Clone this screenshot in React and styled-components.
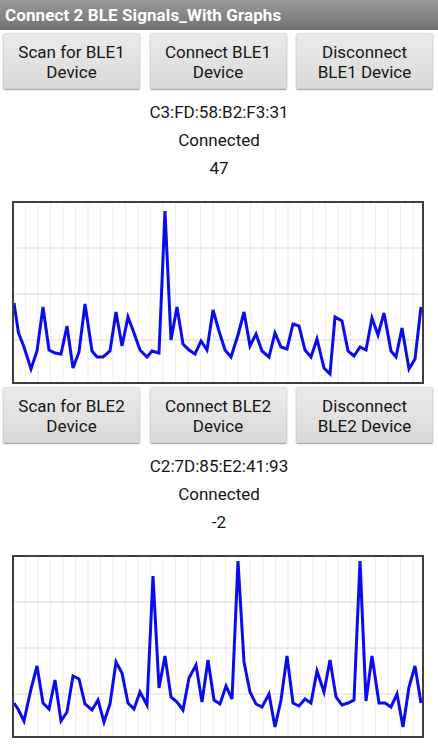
import React from "react";
import styled, { createGlobalStyle } from "styled-components";

const GlobalStyle = createGlobalStyle`
  html, body {
    margin: 0;
    padding: 0;
    background: #ffffff;
  }
  body {
    font-family: Roboto, "Noto Sans", "Liberation Sans", sans-serif;
    color: #1a1a1a;
  }
  * { box-sizing: border-box; }
`;

const Screen = styled.div`
  width: 438px;
  min-height: 750px;
  background: #ffffff;
  display: flex;
  flex-direction: column;
`;

const TitleBar = styled.div`
  height: 30px;
  display: flex;
  align-items: center;
  padding-left: 5px;
  background: linear-gradient(#9a9a9a, #727272);
  color: #ffffff;
  font-weight: 700;
  font-size: 17px;
  letter-spacing: 0.1px;
`;

const Section = styled.section`
  display: flex;
  flex-direction: column;
`;

const ButtonRow = styled.div`
  display: grid;
  grid-template-columns: repeat(3, 137px);
  column-gap: 9.5px;
  padding-left: 3px;
  margin-top: 3px;
`;

const ActionButton = styled.button`
  height: 56px;
  margin: 0;
  padding: 2px 2px 0;
  border: none;
  border-radius: 2px;
  background: linear-gradient(#ebebeb, #d9d9d9);
  box-shadow: 0 1px 1.5px rgba(0, 0, 0, 0.4), inset 0 0 0 1px rgba(0, 0, 0, 0.05);
  font-family: Roboto, "Noto Sans", "Liberation Sans", sans-serif;
  font-size: 17px;
  line-height: 20px;
  color: #161616;
  text-align: center;
  cursor: pointer;
`;

const StatusBlock = styled.div`
  margin-top: 9px;
  display: flex;
  flex-direction: column;
  align-items: center;
`;

const StatusLine = styled.div`
  height: 28px;
  line-height: 28px;
  font-size: 17px;
  color: #161616;
`;

const ChartFrame = styled.div`
  margin: 19px 0 0 12px;
  width: 412px;
  height: 183px;
  border: 2px solid #3e3e3e;
  background: #ffffff;
`;

const ChartSvg = styled.svg`
  display: block;
  width: 100%;
  height: 100%;
`;

const W = 408;
const H = 179;
const verticalGrid = Array.from({ length: 32 }, (_, k) => 11.5 + 12.5 * k);
const horizontalGrid = [45, 91, 137];

const signal1 = [
  [0, 100], [4.5, 130], [10, 144], [17, 166], [23, 148], [29, 104], [35, 147],
  [41, 150], [47, 151], [53, 123], [59, 165], [65, 149], [71, 101], [78, 148],
  [83, 154], [89, 154], [96, 148], [102, 109], [108, 143], [114, 114], [120, 130],
  [126, 147], [133, 154], [138, 148], [145, 150], [151, 8], [157, 137], [163, 104],
  [169, 141], [175, 147], [181, 151], [187, 138], [193, 147], [199, 107], [205, 128],
  [211, 147], [217, 154], [224, 132], [230, 109], [236, 143], [242, 131], [248, 148],
  [255, 154], [261, 130], [267, 144], [273, 146], [279, 121], [285, 123], [291, 147],
  [297, 154], [303, 136], [310, 165], [316, 171], [321, 114], [328, 118], [334, 148],
  [340, 153], [346, 144], [352, 147], [358, 115], [364, 132], [370, 110], [377, 148],
  [382, 154], [388, 125], [395, 166], [401, 156], [407, 104],
];

const signal2 = [
  [0, 146], [4, 152], [10, 164], [17, 132], [23, 109], [29, 146], [35, 152],
  [41, 123], [47, 164], [53, 155], [59, 119], [65, 122], [71, 147], [78, 153],
  [84, 143], [90, 165], [96, 147], [102, 105], [108, 116], [114, 146], [120, 152],
  [126, 135], [133, 148], [139, 19], [145, 131], [151, 99], [157, 140], [163, 145],
  [169, 153], [175, 121], [182, 108], [188, 145], [194, 103], [200, 143], [206, 147],
  [212, 129], [218, 142], [224, 4], [230, 105], [236, 135], [242, 147], [248, 150],
  [255, 137], [261, 170], [267, 143], [273, 99], [279, 146], [285, 149], [291, 142],
  [297, 146], [303, 114], [310, 135], [316, 103], [322, 140], [328, 148], [334, 146],
  [340, 143], [346, 4], [352, 144], [358, 99], [365, 146], [371, 146], [377, 150],
  [383, 137], [389, 170], [395, 130], [401, 109], [407, 146],
];

function SignalChart({ points }) {
  const path = points.map(([x, y]) => `${x},${y}`).join(" ");
  return (
    <ChartFrame>
      <ChartSvg viewBox={`0 0 ${W} ${H}`} preserveAspectRatio="none">
        {verticalGrid.map((x) => (
          <line key={`v${x}`} x1={x} y1={0} x2={x} y2={H} stroke="#efefef" strokeWidth="1.2" />
        ))}
        {horizontalGrid.map((y) => (
          <line key={`h${y}`} x1={0} y1={y} x2={W} y2={y} stroke="#dcdcdc" strokeWidth="1.2" />
        ))}
        <polyline
          points={path}
          fill="none"
          stroke="#0b0bf2"
          strokeWidth="3"
          strokeLinejoin="miter"
          strokeMiterlimit="4"
        />
      </ChartSvg>
    </ChartFrame>
  );
}

function DevicePanel({ id, address, status, value, points }) {
  return (
    <Section>
      <ButtonRow>
        <ActionButton>
          Scan for BLE{id}
          <br />
          Device
        </ActionButton>
        <ActionButton>
          Connect BLE{id}
          <br />
          Device
        </ActionButton>
        <ActionButton>
          Disconnect
          <br />
          BLE{id} Device
        </ActionButton>
      </ButtonRow>
      <StatusBlock>
        <StatusLine>{address}</StatusLine>
        <StatusLine>{status}</StatusLine>
        <StatusLine>{value}</StatusLine>
      </StatusBlock>
      <SignalChart points={points} />
    </Section>
  );
}

export default function App() {
  return (
    <>
      <GlobalStyle />
      <Screen>
        <TitleBar>Connect 2 BLE Signals_With Graphs</TitleBar>
        <DevicePanel id={1} address="C3:FD:58:B2:F3:31" status="Connected" value="47" points={signal1} />
        <DevicePanel id={2} address="C2:7D:85:E2:41:93" status="Connected" value="-2" points={signal2} />
      </Screen>
    </>
  );
}
